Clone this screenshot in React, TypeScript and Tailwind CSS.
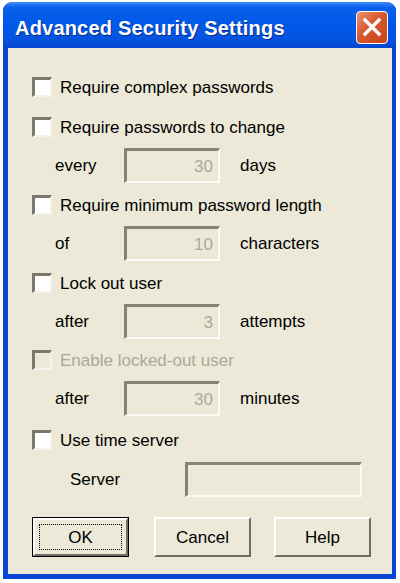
import React from "react"

const font = { fontFamily: '"Liberation Sans", Arial, sans-serif' }

function CheckBox({ label, disabled }: { label: string; disabled?: boolean }) {
  return (
    <div className="flex items-center h-[20px] pl-[24px]">
      <span
        className={`w-[20px] h-[20px] box-border border-t-[3px] border-l-[3px] border-r-[2px] border-b-[2px] border-t-[#7b786c] border-l-[#7b786c] border-r-[#f4f3ee] border-b-[#f4f3ee] ${
          disabled ? "bg-[#ece9d8]" : "bg-white"
        }`}
      />
      <span className={`ml-[8px] text-[17px] leading-none ${disabled ? "text-[#aca899]" : "text-black"}`}>{label}</span>
    </div>
  )
}

function Field({ value, w }: { value: string; w: string }) {
  return (
    <div
      className={`${w} h-[35px] box-border border-t-[3px] border-l-[3px] border-r-[2px] border-b-[2px] border-t-[#858276] border-l-[#858276] border-r-[#fbfaf6] border-b-[#fbfaf6] bg-[#ece9d8] flex items-center justify-end pr-[5px] text-[17px] text-[#aca899] leading-none`}
    >
      {value}
    </div>
  )
}

function FieldRow({ label, value, unit }: { label: string; value: string; unit: string }) {
  return (
    <div className="flex items-center h-[35px] pl-[47px] mt-[11px] text-[17px] leading-none text-black">
      <span className="w-[69px]">{label}</span>
      <Field value={value} w="w-[96px]" />
      <span className="ml-[20px]">{unit}</span>
    </div>
  )
}

function Button({ label, isDefault, className }: { label: string; isDefault?: boolean; className?: string }) {
  return (
    <button
      className={`w-[97px] h-[40px] box-border bg-[#ece9d8] text-[17px] leading-none text-black ${
        isDefault ? "border border-black p-0" : ""
      } ${className ?? ""}`}
    >
      <div className="w-full h-full box-border border-t-2 border-l-2 border-r-2 border-b-2 border-t-white border-l-white border-r-[#716f64] border-b-[#716f64] flex items-center justify-center">
        {isDefault ? (
          <div className="w-[calc(100%-8px)] h-[calc(100%-8px)] border border-dotted border-black flex items-center justify-center">
            {label}
          </div>
        ) : (
          label
        )}
      </div>
    </button>
  )
}

export default function App() {
  return (
    <div className="w-[400px] h-[583px] bg-white pt-[2px] pl-[3px]" style={font}>
      <div className="w-[393px] h-[577px] flex flex-col rounded-t-[9px] overflow-hidden bg-[#0845d6]">
        <div className="h-[46px] shrink-0 flex items-center pl-[12px] pr-[8px] bg-[linear-gradient(to_bottom,#3d8ef8_0%,#0a5fea_12%,#0058e8_50%,#0553e0_80%,#0646cf_100%)]">
          <span className="text-white font-bold text-[20px] leading-none tracking-[0.2px] [text-shadow:1px_1px_0_#0b2a8a] pt-[5px]">
            Advanced Security Settings
          </span>
          <div className="ml-auto mt-[4px] w-[32px] h-[33px] rounded-[4px] border border-white bg-[linear-gradient(135deg,#ec9373_0%,#d9582e_45%,#c8421b_100%)] flex items-center justify-center">
            <svg width="20" height="20" viewBox="0 0 20 20">
              <path d="M3 3 L17 17 M17 3 L3 17" stroke="white" strokeWidth="3.4" strokeLinecap="square" />
            </svg>
          </div>
        </div>
        <div className="flex-1 px-[5px] pb-[5px] pr-[4px] flex">
          <div className="flex-1 bg-[#ece9d8] flex flex-col pt-[29px]">
            <CheckBox label="Require complex passwords" />
            <div className="mt-[20px]">
              <CheckBox label="Require passwords to change" />
            </div>
            <FieldRow label="every" value="30" unit="days" />
            <div className="mt-[12px]">
              <CheckBox label="Require minimum password length" />
            </div>
            <FieldRow label="of" value="10" unit="characters" />
            <div className="mt-[12px]">
              <CheckBox label="Lock out user" />
            </div>
            <FieldRow label="after" value="3" unit="attempts" />
            <div className="mt-[11px]">
              <CheckBox label="Enable locked-out user" disabled />
            </div>
            <FieldRow label="after" value="30" unit="minutes" />
            <div className="mt-[14px]">
              <CheckBox label="Use time server" />
            </div>
            <div className="flex items-center h-[35px] pl-[62px] mt-[12px] text-[17px] leading-none text-black">
              <span className="w-[115px]">Server</span>
              <Field value="" w="w-[177px]" />
            </div>
            <div className="flex mt-[20px] pl-[24px]">
              <Button label="OK" isDefault className="w-[96px]" />
              <Button label="Cancel" className="ml-[25px]" />
              <Button label="Help" className="ml-[23px]" />
            </div>
          </div>
        </div>
      </div>
    </div>
  )
}
